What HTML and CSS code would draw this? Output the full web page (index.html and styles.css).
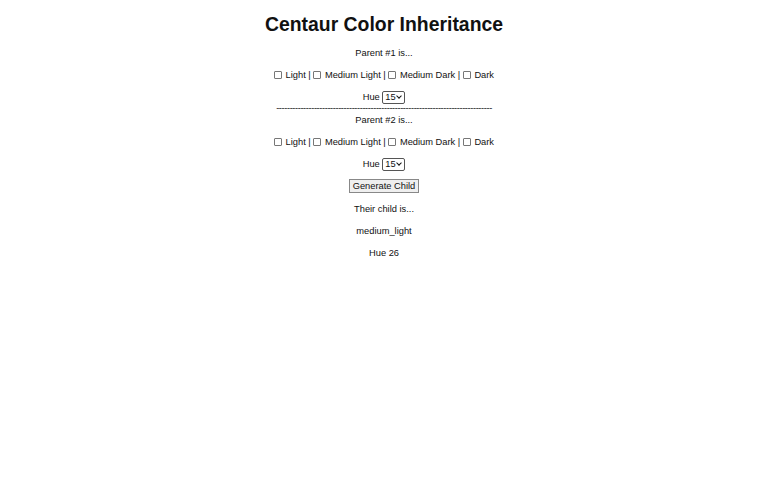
FILE: index.html
```html
<!DOCTYPE html>
<html>
<head>
    <meta charset="utf-8"/>
    <title>Centaur Color Inheritance</title>
    <link rel="stylesheet" href="styles.css">
</head>
<body>
<h1>Centaur Color Inheritance</h1>
<div class="parent">
    <p>Parent #1 is...</p>
    <p class="shades">
        <label><input type="checkbox" name="p1_light"> Light</label> |
        <label><input type="checkbox" name="p1_medium_light"> Medium Light</label> |
        <label><input type="checkbox" name="p1_medium_dark"> Medium Dark</label> |
        <label><input type="checkbox" name="p1_dark"> Dark</label>
    </p>
    <p class="hue">Hue <span class="pick"><select name="p1_hue"><option>15</option></select></span></p>
</div>
<div class="divider">--------------------------------------------------------------------------------</div>
<div class="parent">
    <p class="first">Parent #2 is...</p>
    <p class="shades">
        <label><input type="checkbox" name="p2_light"> Light</label> |
        <label><input type="checkbox" name="p2_medium_light"> Medium Light</label> |
        <label><input type="checkbox" name="p2_medium_dark"> Medium Dark</label> |
        <label><input type="checkbox" name="p2_dark"> Dark</label>
    </p>
    <p class="hue">Hue <span class="pick"><select name="p2_hue"><option>15</option></select></span></p>
</div>
<p class="go"><input type="button" value="Generate Child"></p>
<p>Their child is...</p>
<p id="child_shade">medium_light</p>
<p id="child_hue">Hue 26</p>
</body>
</html>
```

FILE: styles.css
```css
body {
    margin: 0;
    color: #111;
    font: 9.3px "Liberation Sans", Arial, sans-serif;
    text-align: center;
}

h1 {
    font-size: 19.4px;
    margin: 13px 0 11px;
    line-height: 23px;
}

p {
    margin: 10px 0;
    line-height: 12px;
}

.parent p.first {
    margin-top: 0;
}

.hue {
    margin-bottom: 0;
    height: 13px;
    line-height: 13px;
}

.divider {
    width: 219px;
    margin: -1px auto 0;
    overflow: hidden;
    white-space: nowrap;
    line-height: 11px;
    letter-spacing: -0.4px;
}

input[type=checkbox] {
    -webkit-appearance: none;
    appearance: none;
    width: 8px;
    height: 8px;
    margin: 0 1px 0 0;
    border: 1px solid #777;
    border-radius: 1px;
    background: #fff;
    vertical-align: -1px;
}

.pick {
    position: relative;
    display: inline-block;
    vertical-align: top;
}

.pick select {
    -webkit-appearance: none;
    appearance: none;
    width: 23px;
    height: 13px;
    padding: 0 0 0 2px;
    border: 1px solid #555;
    border-radius: 2px;
    background: #fff;
    color: #111;
    font: 9.3px "Liberation Sans", Arial, sans-serif;
    line-height: 11px;
}

/* the little chevron on the hue picker */
.pick::after {
    content: "";
    position: absolute;
    right: 4px;
    top: 3px;
    width: 3px;
    height: 3px;
    border: solid #111;
    border-width: 0 1px 1px 0;
    transform: rotate(45deg);
    pointer-events: none;
}

.go {
    margin-top: 8px;
}

input[type=button] {
    font: 9.3px "Liberation Sans", Arial, sans-serif;
    color: #111;
    height: 14px;
    padding: 0 3px;
    border: 1px solid #888;
    border-radius: 0;
    background: #efefef;
}
```
